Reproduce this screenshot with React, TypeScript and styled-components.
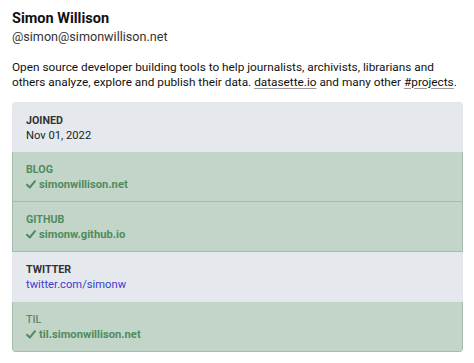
import React from "react";
import styled, { createGlobalStyle } from "styled-components";

const Global = createGlobalStyle`
  html, body { margin: 0; padding: 0; background: #ffffff; }
  body { font-family: Roboto, "Liberation Sans", Arial, sans-serif; color: #111; }
`;

const Page = styled.div`
  padding: 10px 11px 11px 12px;
  display: flex;
  flex-direction: column;
`;

const Name = styled.h1`
  margin: 0;
  font-size: 14.5px;
  font-weight: 700;
  line-height: 18px;
  color: #111;
`;

const Handle = styled.div`
  font-size: 12.6px;
  line-height: 18px;
  color: #333;
`;

const Bio = styled.p`
  margin: 13.5px 0 0 0;
  font-size: 11.8px;
  line-height: 15px;
  color: #111;
  a { color: #111; text-decoration: underline; text-decoration-color: #999; text-underline-offset: 2px; }
`;

const Fields = styled.div`
  margin-top: 12.5px;
  border-radius: 4px;
  overflow: hidden;
  display: flex;
  flex-direction: column;
`;

const Field = styled.div<{ $verified?: boolean }>`
  height: 50px;
  box-sizing: border-box;
  padding: 10px 13px 0;
  background: ${(p) => (p.$verified ? "#c3d5c9" : "#e5e9ee")};
  border: 1px solid ${(p) => (p.$verified ? "#a3bcab" : "#e3e7ec")};
  border-top-width: 0;
  &:first-child { border-top-width: 1px; }
  display: flex;
  flex-direction: column;
`;

const Label = styled.div<{ $verified?: boolean; $light?: boolean }>`
  font-size: 10.7px;
  font-weight: ${(p) => (p.$light ? 500 : 700)};
  line-height: 15px;
  color: ${(p) => (p.$verified ? (p.$light ? "#5a8a66" : "#4f8c5d") : "#333")};
`;

const Value = styled.div<{ $verified?: boolean; $link?: boolean }>`
  font-size: 11.2px;
  line-height: 15px;
  font-weight: ${(p) => (p.$verified ? 700 : 400)};
  color: ${(p) => (p.$verified ? "#4f8c5d" : p.$link ? "#3b3bcf" : "#222")};
  display: flex;
  align-items: center;
  gap: 3px;
`;

const Check = () => (
  <svg width="10" height="9" viewBox="0 0 10 9">
    <path d="M1 4.8 L3.8 7.5 L9 1.2" fill="none" stroke="#4f8c5d" strokeWidth="2" strokeLinecap="round" strokeLinejoin="round" />
  </svg>
);

const fields = [
  { label: "JOINED", value: "Nov 01, 2022" },
  { label: "BLOG", value: "simonwillison.net", verified: true },
  { label: "GITHUB", value: "simonw.github.io", verified: true },
  { label: "TWITTER", value: "twitter.com/simonw", link: true },
  { label: "TIL", value: "til.simonwillison.net", verified: true, light: true },
];

export default function App() {
  return (
    <>
      <Global />
      <Page>
        <Name>Simon Willison</Name>
        <Handle>@simon@simonwillison.net</Handle>
        <Bio>
          Open source developer building tools to help journalists, archivists, librarians and
          others analyze, explore and publish their data. <a>datasette.io</a> and many other{" "}
          <a>#projects</a>.
        </Bio>
        <Fields>
          {fields.map((f) => (
            <Field key={f.label} $verified={f.verified}>
              <Label $verified={f.verified} $light={f.light}>{f.label}</Label>
              <Value $verified={f.verified} $link={f.link}>
                {f.verified && <Check />}
                {f.value}
              </Value>
            </Field>
          ))}
        </Fields>
      </Page>
    </>
  );
}
